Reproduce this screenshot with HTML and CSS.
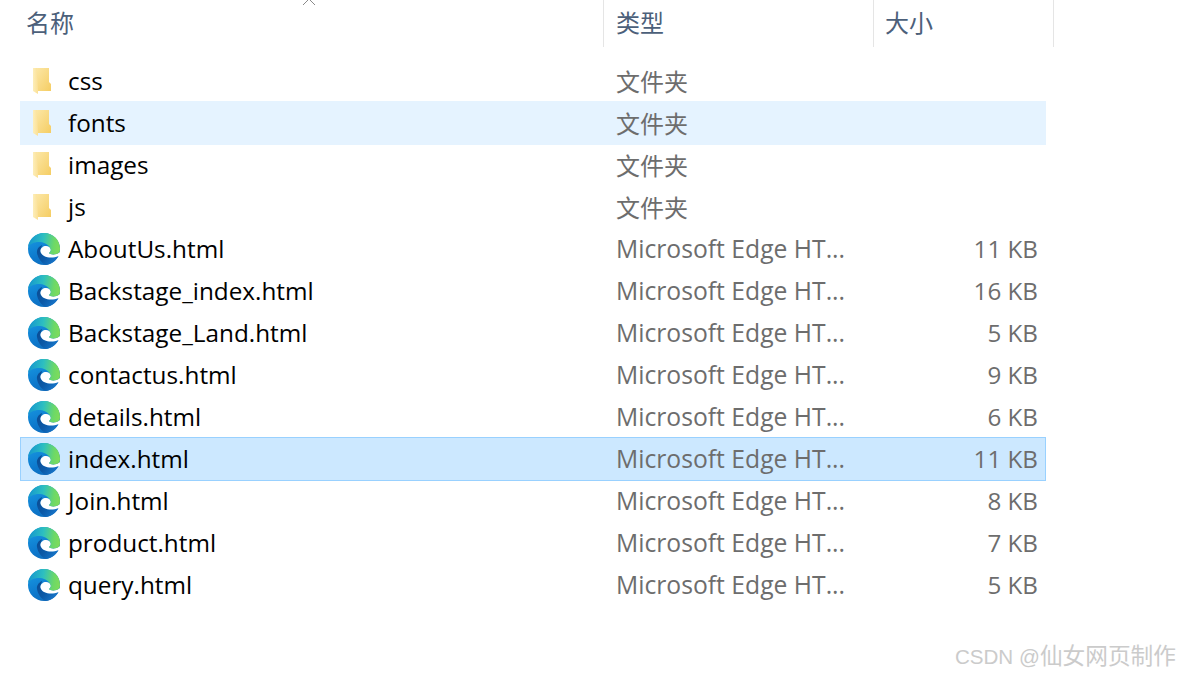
FILE: index.html
```html
<!DOCTYPE html>
<html lang="zh">
<head>
<meta charset="utf-8">
<title>文件列表</title>
<link rel="stylesheet" href="styles.css">
</head>
<body>
<svg class="defs" width="0" height="0" aria-hidden="true">
  <defs>
    <linearGradient id="fb" x1="0" y1="0" x2="1" y2="1"><stop offset="0" stop-color="#fce7a6"/><stop offset="1" stop-color="#f5cd63"/></linearGradient>
    <linearGradient id="ff" x1="0" y1="0" x2="1" y2="0"><stop offset="0" stop-color="#fdeeb9"/><stop offset="1" stop-color="#fbe096"/></linearGradient>
    <linearGradient id="e0" x1="0.3" y1="0.2" x2="0.6" y2="1"><stop offset="0" stop-color="#1590dc"/><stop offset=".6" stop-color="#0d78cc"/><stop offset="1" stop-color="#0f6cbc"/></linearGradient>
    <linearGradient id="e1" x1="0" y1="0.5" x2="1" y2="0.6"><stop offset="0" stop-color="#1596cf"/><stop offset=".45" stop-color="#2dbfc0"/><stop offset=".8" stop-color="#6cd868"/><stop offset="1" stop-color="#7fdc5a"/></linearGradient>
    <linearGradient id="e3" x1="0" y1="0" x2="1" y2="0.7"><stop offset="0" stop-color="#0b4a90"/><stop offset=".55" stop-color="#0c5aa8"/><stop offset="1" stop-color="#1878cc"/></linearGradient>
    <symbol id="folder" viewBox="0 0 20 28">
      <path fill="url(#fb)" d="M4 1H17V15L19 17V24H5Z"/>
      <path fill="url(#ff)" d="M1 1H5L6 23.500 6 27 1 24Z"/>
    </symbol>
    <symbol id="edge" viewBox="0 0 32 32">
      <circle cx="16" cy="16" r="16" fill="url(#e0)"/>
      <path fill="url(#e3)" d="M14 12C10 14 8.500 17 9 20C9.800 25 13 29.500 17.500 32C22.500 32 27.500 28.500 30.500 23C27 24.500 23 25 19.500 24.200C15.500 23.300 12.600 21 12.400 18C12.500 15.500 14 13.500 14 12Z"/>
      <path fill="#fff" d="M12.400 18C12.600 15 15 13 18 13C20.500 13 22.500 14.500 22.800 16.500C23 17.800 22.300 18.800 21.300 19.800C21 20.300 21.500 20.700 22.300 21C25 22 29 21.500 31.300 19.500L33 19V24L30.500 23C27 24.500 23 25 19.500 24.200C15.500 23.300 12.600 21 12.400 18Z"/>
      <path fill="url(#e1)" d="M0 14C1 6 8 0 16 0C25 0 32 7 32 15.500C32 17 31.800 18 31.300 19.500C29 21.500 25 22 22.300 21C21.500 20.700 21 20.300 21.300 19.800C22.300 18.800 23 17.800 22.800 16.500C22 13 18 9.500 12 9C6 8.700 2 11 0 14Z"/>
    </symbol>
  </defs>
</svg>

<header class="head">
  <div class="hcell hname">名称</div>
  <div class="hcell htype">类型</div>
  <div class="hcell hsize">大小</div>
</header>
<svg class="sort" width="16" height="5" viewBox="0 0 16 5" aria-hidden="true"><path d="M2 5 8 -1 14 5" fill="none" stroke="#8a8a8a" stroke-width="1"/></svg>

<main class="list">
  <div class="row"><svg class="ico-folder"><use href="#folder"/></svg><span class="name">css</span><span class="type">文件夹</span><span class="size"></span></div>
  <div class="row hover"><svg class="ico-folder"><use href="#folder"/></svg><span class="name">fonts</span><span class="type">文件夹</span><span class="size"></span></div>
  <div class="row"><svg class="ico-folder"><use href="#folder"/></svg><span class="name">images</span><span class="type">文件夹</span><span class="size"></span></div>
  <div class="row"><svg class="ico-folder"><use href="#folder"/></svg><span class="name">js</span><span class="type">文件夹</span><span class="size"></span></div>
  <div class="row"><svg class="ico-edge"><use href="#edge"/></svg><span class="name">AboutUs.html</span><span class="type latin">Microsoft Edge HT...</span><span class="size">11 KB</span></div>
  <div class="row"><svg class="ico-edge"><use href="#edge"/></svg><span class="name">Backstage_index.html</span><span class="type latin">Microsoft Edge HT...</span><span class="size">16 KB</span></div>
  <div class="row"><svg class="ico-edge"><use href="#edge"/></svg><span class="name">Backstage_Land.html</span><span class="type latin">Microsoft Edge HT...</span><span class="size">5 KB</span></div>
  <div class="row"><svg class="ico-edge"><use href="#edge"/></svg><span class="name">contactus.html</span><span class="type latin">Microsoft Edge HT...</span><span class="size">9 KB</span></div>
  <div class="row"><svg class="ico-edge"><use href="#edge"/></svg><span class="name">details.html</span><span class="type latin">Microsoft Edge HT...</span><span class="size">6 KB</span></div>
  <div class="row selected"><svg class="ico-edge"><use href="#edge"/></svg><span class="name">index.html</span><span class="type latin">Microsoft Edge HT...</span><span class="size">11 KB</span></div>
  <div class="row"><svg class="ico-edge"><use href="#edge"/></svg><span class="name">Join.html</span><span class="type latin">Microsoft Edge HT...</span><span class="size">8 KB</span></div>
  <div class="row"><svg class="ico-edge"><use href="#edge"/></svg><span class="name">product.html</span><span class="type latin">Microsoft Edge HT...</span><span class="size">7 KB</span></div>
  <div class="row"><svg class="ico-edge"><use href="#edge"/></svg><span class="name">query.html</span><span class="type latin">Microsoft Edge HT...</span><span class="size">5 KB</span></div>
</main>
<div class="watermark">CSDN @<span class="wm-cjk">仙女网页制作</span></div>
</body>
</html>
```
FILE: styles.css
```css
* { box-sizing: border-box; }
html, body { margin: 0; height: 100%; }
body {
  background: #fff;
  overflow: hidden;
  font-family: "Open Sans", "Noto Sans CJK SC", sans-serif;
  position: relative;
}
.defs { position: absolute; }
.head { display: flex; height: 47px; }
.hcell {
  font-family: "Noto Sans CJK SC", sans-serif;
  font-size: 24px;
  line-height: 43px;
  color: #4c607a;
  border-right: 1px solid #e5e5e5;
}
.hname { width: 604px; padding-left: 26px; }
.htype { width: 270px; padding-left: 12px; }
.hsize { width: 180px; padding-left: 11px; }
.sort { position: absolute; left: 301px; top: 0; }
.list { margin: 12px 0 0 20px; width: 1026px; display: flex; flex-direction: column; }
.row {
  display: flex;
  align-items: center;
  height: 44px;
  margin-bottom: -2px;
  border: 1px solid transparent;
  position: relative;
}
.row.hover { background: #e5f3ff; border-color: #e5f3ff; }
.row.selected { background: #cce8ff; border-color: #99d1ff; }
.ico-folder { width: 20px; height: 28px; margin-left: 11px; margin-right: 16px; flex: none; }
.ico-edge { width: 32px; height: 32px; margin-left: 7px; margin-right: 8px; flex: none; }
.name { width: 548px; flex: none; font-size: 24.3px; line-height: 40px; color: #000; white-space: nowrap; }
.type { width: 280px; flex: none; font-family: "Noto Sans CJK SC", sans-serif; font-size: 24px; line-height: 40px; padding-bottom: 1px; color: #6d6d6d; white-space: nowrap; }
.type.latin { font-family: "Open Sans", sans-serif; font-size: 24.7px; padding-bottom: 0; }
.size { width: 120px; flex: none; margin-left: auto; margin-right: 7px; text-align: right; font-size: 24.2px; line-height: 40px; color: #6d6d6d; white-space: nowrap; }
.watermark {
  position: absolute;
  right: 3px;
  top: 640px;
  font-family: "Liberation Sans", "Noto Sans CJK SC", sans-serif;
  font-size: 20.6px;
  line-height: 30px;
  color: #cbcbcb;
  white-space: nowrap;
}
.wm-cjk { font-size: 22.7px; font-family: "Noto Sans CJK SC", sans-serif; }
```
